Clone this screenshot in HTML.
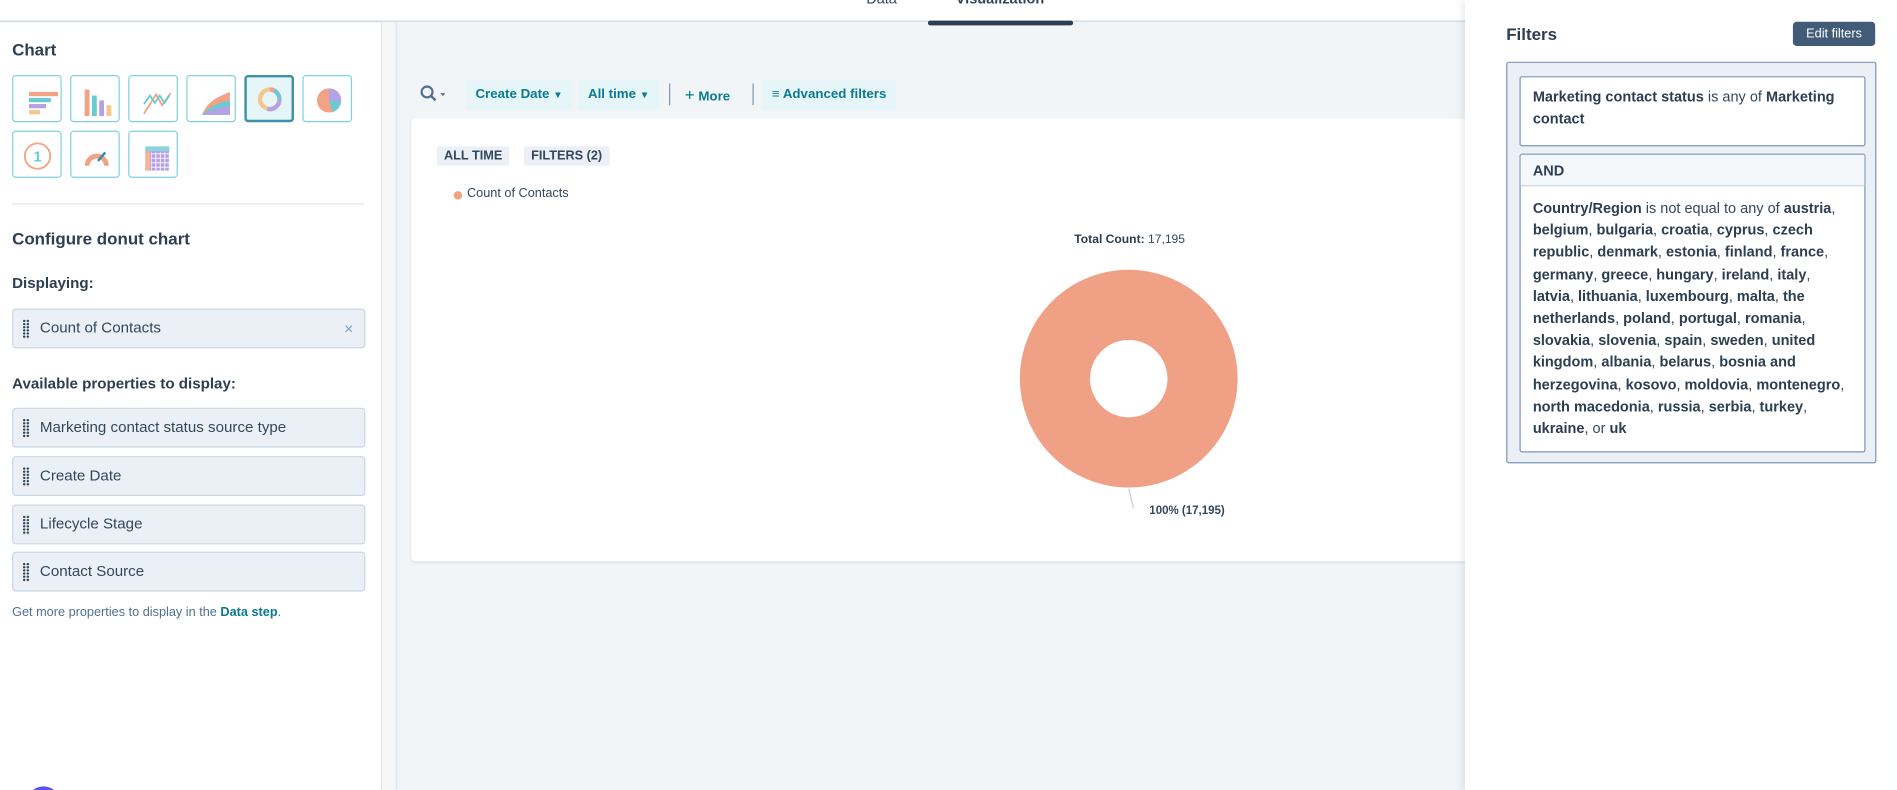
<!DOCTYPE html>
<html><head><meta charset="utf-8"><style>
*{box-sizing:border-box;margin:0;padding:0}
html,body{width:1897px;height:790px;overflow:hidden;background:#fff}
#w{position:absolute;left:0;top:0;width:1568px;height:653px;overflow:hidden;transform:scale(1.2098);transform-origin:0 0;font-family:"Liberation Sans",sans-serif;color:#33475b;background:#f1f5f8}
.abs{position:absolute}
.top{left:0;top:0;width:1568px;height:18px;background:#fff;border-bottom:1px solid #cbd6e2}
.left{left:0;top:19px;width:315px;height:634px;background:#fff;overflow:hidden}
.sb{left:315px;top:19px;width:13px;height:634px;background:#f7f7f7;border-left:1px solid #e5e5e5;border-right:1px solid #dfe3eb}
h3{font-size:14px;font-weight:bold;color:#2d3e50}
.ic{position:absolute;width:41px;height:39px;border:1px solid #7fd1de;border-radius:3px;background:#fff}
.ic svg{position:absolute;left:0;top:0}
.prop{position:absolute;left:10px;width:292px;height:33px;background:#eaf0f6;border:1px solid #cbd6e2;border-radius:3px;font-size:12.5px;line-height:31px;padding-left:22px;color:#33475b}
.prop:before{content:"";position:absolute;left:8px;top:8px;width:2px;height:16px;background:radial-gradient(circle,#33475b 0.9px,transparent 1.1px) 0 0/2px 2.6px;}
.prop:after{content:"";position:absolute;left:11px;top:8px;width:2px;height:16px;background:radial-gradient(circle,#33475b 0.9px,transparent 1.1px) 0 0/2px 2.6px;}
.btn{position:absolute;top:66px;height:25px;background:#e5f5f8;border-radius:2px;font-size:11px;font-weight:bold;color:#0b7a8f;line-height:25px;padding:0 8px}
.tag{position:absolute;top:121px;height:16px;background:#eaf0f6;border-radius:2px;font-size:10.5px;font-weight:bold;color:#33475b;line-height:16px;padding:0 6px}
.panel{left:1211px;top:0;width:357px;height:653px;background:#fff;box-shadow:-3px 0 6px rgba(0,0,0,.08)}
.fb{position:absolute;left:10px;width:286px;background:#fff;border:1px solid #7c98b6;border-radius:2px;font-size:12px;line-height:18.2px;padding:7px 10px;color:#33475b}
b{font-weight:bold;color:#2d3e50}
</style></head><body><div id="w">
<div class="abs top"></div>
<div class="abs" style="left:716px;top:-8px;font-size:12px;color:#33475b">Data</div>
<div class="abs" style="left:790px;top:-8px;font-size:12px;font-weight:bold;color:#33475b">Visualization</div>
<div class="abs" style="left:767px;top:17px;width:120px;height:4px;border-radius:2px;background:#2d3e50"></div>
<div class="abs left">
 <h3 class="abs" style="left:10px;top:14px">Chart</h3>
 <div class="ic" style="left:10px;top:43px"><svg width="41" height="39"><rect x="13" y="13" width="24" height="3.5" fill="#f2a285"/><rect x="13" y="18" width="18" height="3.5" fill="#6acbd4"/><rect x="13" y="23" width="14" height="3.5" fill="#b5a1e6"/><rect x="13" y="28" width="9" height="3.5" fill="#f5c78e"/></svg></div>
 <div class="ic" style="left:58px;top:43px"><svg width="41" height="39"><rect x="11" y="11" width="4" height="22" fill="#f2a285"/><rect x="17" y="16" width="4" height="17" fill="#6acbd4"/><rect x="23" y="20" width="4" height="13" fill="#b5a1e6"/><rect x="29" y="24" width="4" height="9" fill="#f5c78e"/></svg></div>
 <div class="ic" style="left:106px;top:43px"><svg width="41" height="39" fill="none" stroke-width="1.5"><path d="M12 31 L22 15 L27 24 L34 14" stroke="#f2a285"/><path d="M12 23 L17 16 L21 22 L25 16 L29 22 L33 16" stroke="#6acbd4"/></svg></div>
 <div class="ic" style="left:154px;top:43px"><svg width="41" height="39"><path d="M12 32 C16 22 22 18 35 13 V32Z" fill="#f2a285"/><path d="M12 32 C17 26 24 22 35 20 V32Z" fill="#6acbd4"/><path d="M12 32 C18 28 25 26 35 25 V32Z" fill="#b5a1e6"/></svg></div>
 <div class="ic" style="left:202px;top:43px;border:2px solid #3f8fa6;background:#e5f5f8"><svg width="39" height="37"><circle cx="19" cy="18" r="8" fill="none" stroke="#f5c78e" stroke-width="3.5"/><path d="M19 10 A8 8 0 0 1 27 18" fill="none" stroke="#6acbd4" stroke-width="3.5"/><path d="M27 18 A8 8 0 0 1 17 26" fill="none" stroke="#b5a1e6" stroke-width="3.5"/><path d="M19 10 A8 8 0 0 1 22.5 10.8" fill="none" stroke="#f2a285" stroke-width="3.5"/></svg></div>
 <div class="ic" style="left:250px;top:43px"><svg width="41" height="39"><circle cx="21" cy="20" r="10" fill="#f2a285"/><path d="M21 20 L21 10 A10 10 0 0 1 31 21Z" fill="#b5a1e6"/><path d="M21 20 L31 21 A10 10 0 0 1 24 29.5Z" fill="#6acbd4"/></svg></div>
 <div class="ic" style="left:10px;top:89px"><svg width="41" height="39"><circle cx="20" cy="20" r="10.5" fill="none" stroke="#f2a285" stroke-width="1.5"/><text x="20" y="24.5" font-size="12" font-weight="bold" text-anchor="middle" fill="#6acbd4" font-family="Liberation Sans">1</text></svg></div>
 <div class="ic" style="left:58px;top:89px"><svg width="41" height="39"><path d="M13 28 A8 8 0 0 1 29 28" fill="none" stroke="#f2a285" stroke-width="4"/><path d="M22 24 L28 17" stroke="#2d8f9f" stroke-width="2"/></svg></div>
 <div class="ic" style="left:106px;top:89px"><svg width="41" height="39"><defs><pattern id="g" width="3.7" height="3.7" patternUnits="userSpaceOnUse"><rect width="3" height="3" fill="#b5a1e6"/></pattern></defs><rect x="13" y="12" width="20" height="5" fill="#6acbd4" opacity=".8"/><rect x="13" y="16" width="5" height="16" fill="#f2a285" opacity=".8"/><rect x="17" y="16" width="16" height="16" fill="url(#g)"/></svg></div>
 <div class="abs" style="left:10px;top:149px;width:291px;height:1px;background:#dfe3eb"></div>
 <h3 class="abs" style="left:10px;top:170px">Configure donut chart</h3>
 <div class="abs" style="left:10px;top:208px;font-size:12.5px;font-weight:bold;color:#2d3e50">Displaying:</div>
 <div class="prop" style="top:236px">Count of Contacts<span style="position:absolute;right:9px;top:0;color:#7c98b6;font-size:13px">×</span></div>
 <div class="abs" style="left:10px;top:291px;font-size:12.5px;font-weight:bold;color:#2d3e50">Available properties to display:</div>
 <div class="prop" style="top:318px">Marketing contact status source type</div>
 <div class="prop" style="top:358px">Create Date</div>
 <div class="prop" style="top:398px">Lifecycle Stage</div>
 <div class="prop" style="top:437px">Contact Source</div>
 <div class="abs" style="left:10px;top:481px;font-size:10.5px;color:#516f90">Get more properties to display in the <b style="color:#0b7a8f">Data step</b>.</div>
 <div class="abs" style="left:22px;top:631px;width:28px;height:28px;border-radius:50%;background:#5c4ff5"></div>
</div>
<div class="abs sb"></div>
<svg class="abs" style="left:347px;top:70px" width="26" height="16"><circle cx="6" cy="6" r="4.5" fill="none" stroke="#516f90" stroke-width="1.8"/><path d="M9.5 9.5 L13 13" stroke="#516f90" stroke-width="2"/><path d="M17 7 L21 7 L19 9.5Z" fill="#516f90"/></svg>
<div class="btn" style="left:385px">Create Date <span style="font-size:8px">▼</span></div>
<div class="btn" style="left:478px">All time <span style="font-size:8px">▼</span></div>
<div class="abs" style="left:553px;top:69px;width:1px;height:18px;background:#7c98b6"></div>
<div class="abs" style="left:566px;top:66px;font-size:11px;font-weight:bold;color:#0b7a8f;line-height:25px"><span style="font-size:14px;font-weight:normal">+</span> More</div>
<div class="abs" style="left:622px;top:69px;width:1px;height:18px;background:#7c98b6"></div>
<div class="btn" style="left:630px">≡ Advanced filters</div>
<div class="abs" style="left:340px;top:98px;width:880px;height:366px;background:#fff;border-radius:3px;box-shadow:0 1px 2px rgba(0,0,0,.08)"></div>
<div class="tag" style="left:361px">ALL TIME</div>
<div class="tag" style="left:433px">FILTERS (2)</div>
<div class="abs" style="left:375px;top:158px;width:7px;height:7px;border-radius:50%;background:#f2a285"></div>
<div class="abs" style="left:386px;top:154px;font-size:10.5px;color:#33475b">Count of Contacts</div>
<div class="abs" style="left:888px;top:193px;font-size:10px;color:#33475b"><b>Total Count:</b> 17,195</div>
<svg class="abs" style="left:840px;top:220px" width="190" height="215"><circle cx="93" cy="93" r="61" fill="none" stroke="#f0a084" stroke-width="58"/><path d="M93 184 Q95 192 97 200" fill="none" stroke="#ccc" stroke-width="1"/></svg>
<div class="abs" style="left:950px;top:417px;font-size:9.5px;font-weight:bold;color:#33475b">100% (17,195)</div>
<div class="abs panel">
 <div class="abs" style="left:34px;top:20px;font-size:14px;font-weight:bold;color:#2d3e50">Filters</div>
 <div class="abs" style="left:271px;top:18px;width:68px;height:20px;background:#425b76;border-radius:3px;color:#fff;font-size:10.5px;line-height:20px;text-align:center">Edit filters</div>
 <div class="abs" style="left:34px;top:51px;width:306px;height:332px;background:#eaf0f6;border:1px solid #7c98b6;border-radius:2px">
  <div class="fb" style="top:11px;height:58px"><b>Marketing contact status</b> is any of <b>Marketing contact</b></div>
  <div class="fb" style="top:75px;height:247px;padding:0">
   <div style="background:#f5f8fa;border-bottom:1px solid #cbd6e2;height:26px;line-height:26px;padding-left:10px"><b>AND</b></div>
   <div style="padding:9px 10px"><b>Country/Region</b> is not equal to any of <b>austria</b>, <b>belgium</b>, <b>bulgaria</b>, <b>croatia</b>, <b>cyprus</b>, <b>czech republic</b>, <b>denmark</b>, <b>estonia</b>, <b>finland</b>, <b>france</b>, <b>germany</b>, <b>greece</b>, <b>hungary</b>, <b>ireland</b>, <b>italy</b>, <b>latvia</b>, <b>lithuania</b>, <b>luxembourg</b>, <b>malta</b>, <b>the netherlands</b>, <b>poland</b>, <b>portugal</b>, <b>romania</b>, <b>slovakia</b>, <b>slovenia</b>, <b>spain</b>, <b>sweden</b>, <b>united kingdom</b>, <b>albania</b>, <b>belarus</b>, <b>bosnia and herzegovina</b>, <b>kosovo</b>, <b>moldovia</b>, <b>montenegro</b>, <b>north macedonia</b>, <b>russia</b>, <b>serbia</b>, <b>turkey</b>, <b>ukraine</b>, or <b>uk</b></div>
  </div>
 </div>
</div>
</div></body></html>
